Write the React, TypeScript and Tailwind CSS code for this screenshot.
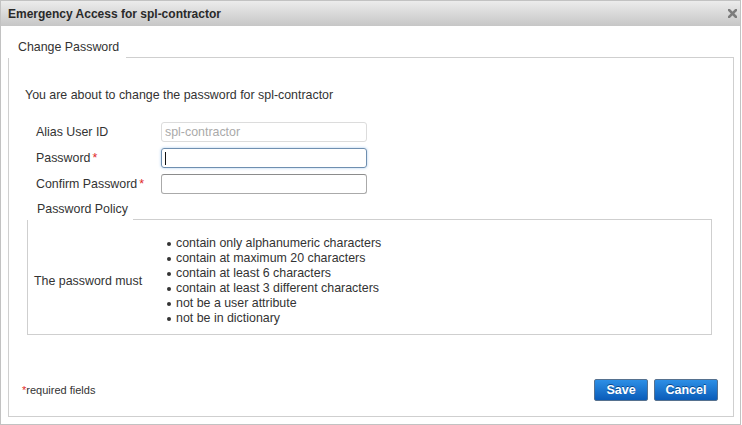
export default function App() {
  const rules = [
    "contain only alphanumeric characters",
    "contain at maximum 20 characters",
    "contain at least 6 characters",
    "contain at least 3 different characters",
    "not be a user attribute",
    "not be in dictionary",
  ];

  return (
    <div className="w-[742px] h-[425px] bg-white font-['Liberation_Sans',Arial,sans-serif] text-[12.4px] text-[#333]">
      <div className="w-[741px] h-[425px] border border-[#c2c2c2] flex flex-col">
        {/* title bar */}
        <div className="h-[25px] shrink-0 bg-gradient-to-b from-[#ececec] to-[#c6c6c6] flex items-center justify-between pl-[7px] pr-[3px]">
          <span className="font-bold text-[12px] text-[#2a2a2a]">Emergency Access for spl-contractor</span>
          <svg width="9" height="9" viewBox="0 0 9 9" className="mb-[1px]">
            <path d="M1 1 L8 8 M8 1 L1 8" stroke="#7c7c7c" strokeWidth="2.6" strokeLinecap="square" />
          </svg>
        </div>

        <div className="flex-1 flex flex-col pl-[7px] pr-[6px] pt-[11px] pb-[7px]">
          {/* legend */}
          <div className="flex h-[21px] shrink-0">
            <div className="w-[118px] pl-[10px] leading-[20px]">Change Password</div>
            <div className="flex-1 border-b border-[#cfcfcf]" />
          </div>

          <div className="flex-1 flex flex-col border-x border-b border-[#cfcfcf]">
            <p className="pl-[16px] pt-[30px] leading-[15px]">
              You are about to change the password for spl-contractor
            </p>

            <div className="mt-[16px] pl-[27px]">
              <div className="flex items-center h-[26px]">
                <span className="w-[125px]">Alias User ID</span>
                <input
                  readOnly
                  value="spl-contractor"
                  className="w-[206px] h-[20px] border border-[#dcdcdc] rounded-[3px] px-[3px] text-[12.4px] text-[#aaa] outline-none"
                />
              </div>
              <div className="flex items-center h-[26px]">
                <span className="w-[125px]">
                  Password<span className="text-[#e02a2a] ml-[2px]">*</span>
                </span>
                <div className="w-[206px] h-[20px] border border-[#6f8fb0] rounded-[3px] shadow-[0_0_3px_#a9cbee] flex items-center pl-[3px]">
                  <span className="w-[1px] h-[13px] bg-[#111]" />
                </div>
              </div>
              <div className="flex items-center h-[26px]">
                <span className="w-[125px]">
                  Confirm Password<span className="text-[#e02a2a] ml-[2px]">*</span>
                </span>
                <input
                  type="password"
                  className="w-[206px] h-[20px] border border-[#aaa] border-t-[#8c8c8c] rounded-[3px] px-[3px] outline-none"
                />
              </div>
            </div>

            {/* password policy */}
            <div className="flex h-[21px] shrink-0 mt-[2px] ml-[18px] mr-[21px]">
              <div className="w-[106px] pl-[10px] leading-[20px]">Password Policy</div>
              <div className="flex-1 border-b border-[#cfcfcf]" />
            </div>
            <div className="ml-[18px] mr-[21px] border-x border-b border-[#cfcfcf] flex items-center pt-[16px] pb-[8px] pl-[6px]">
              <span className="w-[133px]">The password must</span>
              <ul className="leading-[15px]">
                {rules.map((r) => (
                  <li key={r} className="flex items-center">
                    <span className="w-[4px] h-[4px] rounded-full bg-[#333] mr-[5px]" />
                    {r}
                  </li>
                ))}
              </ul>
            </div>

            <div className="flex-1" />

            <div className="flex items-center justify-between h-[22px] mb-[15px] pl-[13px] pr-[15px]">
              <span className="text-[11px]">
                <span className="text-[#e02a2a]">*</span>required fields
              </span>
              <div className="flex gap-[6px]">
                <button className="w-[54px] h-[22px] rounded-[2px] border border-[#56718f] bg-gradient-to-b from-[#2d8fe6] to-[#0a5cb9] text-white font-bold text-[12.5px] [text-shadow:0_-1px_0_#0b4a90]">
                  Save
                </button>
                <button className="w-[64px] h-[22px] rounded-[2px] border border-[#56718f] bg-gradient-to-b from-[#2d8fe6] to-[#0a5cb9] text-white font-bold text-[12.5px] [text-shadow:0_-1px_0_#0b4a90]">
                  Cancel
                </button>
              </div>
            </div>
          </div>
        </div>
      </div>
    </div>
  );
}
